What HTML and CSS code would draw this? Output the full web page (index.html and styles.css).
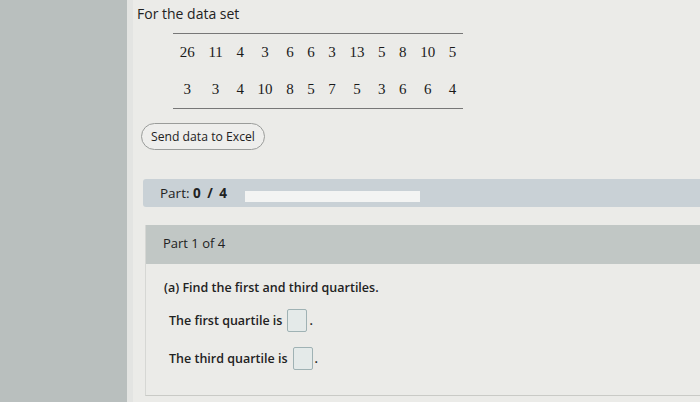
FILE: index.html
```html
<!DOCTYPE html>
<html lang="en">
<head>
    <meta charset="UTF-8" />
    <title>Quartiles – Part 1 of 4</title>
    <link rel="stylesheet" href="styles.css">
</head>
<body>
  <div class="sidebar"></div>

  <div class="main">
    <p class="intro">For the data set</p>

    <table class="data-set">
      <tr>
        <td>26</td><td>11</td><td>4</td><td>3</td><td>6</td><td>6</td>
        <td>3</td><td>13</td><td>5</td><td>8</td><td>10</td><td>5</td>
      </tr>
      <tr>
        <td>3</td><td>3</td><td>4</td><td>10</td><td>8</td><td>5</td>
        <td>7</td><td>5</td><td>3</td><td>6</td><td>6</td><td>4</td>
      </tr>
    </table>

    <button class="excel-btn">Send data to Excel</button>

    <!-- progress -->
    <div class="part-bar">
      <span>Part: <b>0 / 4</b></span>
      <div class="progress"></div>
    </div>

    <div class="part-card">
      <div class="part-title">Part 1 of 4</div>
      <div class="part-body">
        <p class="question">(a) Find the first and third quartiles.</p>
        <div class="answer-row">
          The first quartile is <span class="answer-box"></span><span class="dot">.</span>
        </div>
        <div class="answer-row">
          The third quartile is <span class="answer-box"></span><span class="dot">.</span>
        </div>
      </div>
    </div>
  </div>
</body>
</html>
```

FILE: styles.css
```css
body {
    margin: 0;
    height: 402px;
    display: flex;
    background: #ebebe8;
    font-family: "Open Sans", "DejaVu Sans", sans-serif;
    color: #222;
    overflow: hidden;
}

.sidebar {
    width: 127px;
    background: #b9bfbe;
    flex-shrink: 0;
}

.main {
    flex: 1;
    padding-left: 10px;
    border-left: 6px solid #e3e4e2;
}

.intro {
    font-size: 14px;
    margin: 4px 0 0 -6px;
    height: 21px;
}

.data-set {
    margin: 8px 0 0 30px;
    border-collapse: collapse;
    border-top: 1px solid #777;
    border-bottom: 1px solid #777;
    font-family: "Liberation Serif", "Times New Roman", serif;
    font-size: 15px;
    color: #1a1a1a;
}

    .data-set td {
        height: 37px;
        padding: 0 6.8px;
        text-align: center;
        vertical-align: middle;
    }

.excel-btn {
    display: block;
    margin: 14px 0 0 -2px;
    height: 27px;
    padding: 0 9px;
    border: 1px solid #9a9c9a;
    border-radius: 14px;
    background: #eeeeec;
    font-family: inherit;
    font-size: 12.2px;
    color: #222;
}

.part-bar {
    margin: 29px 0 0 0;
    height: 28px;
    display: flex;
    align-items: center;
    gap: 18px;
    padding-left: 17px;
    background: #c9d1d6;
    border-radius: 3px 0 0 3px;
    font-size: 13.5px;
}

    .part-bar b {
        font-weight: 700;
        word-spacing: 3px;
    }

.progress {
    width: 175px;
    height: 11px;
    background: #f3f4f3;
    margin-top: 6px;
}

.part-card {
    margin: 18px 0 0 2px;
    border-left: 1px solid #d6d7d4;
    border-bottom: 1px solid #c9cac6;
}

.part-title {
    height: 39px;
    line-height: 36px;
    padding-left: 17px;
    background: #c1c7c5;
    font-size: 13px;
}

.part-body {
    height: 131px;
    padding: 15px 0 0 18px;
    box-sizing: border-box;
}

.question {
    margin: 0;
    font-size: 12.5px;
    font-weight: 600;
}

.answer-row {
    display: flex;
    align-items: center;
    gap: 5px;
    margin: 12px 0 0 5px;
    font-size: 12.5px;
    font-weight: 600;
    height: 25px;
}

.answer-row + .answer-row {
    margin-top: 13px;
}

.answer-box {
    width: 18px;
    height: 21px;
    border: 1px solid #9fb2b4;
    border-radius: 2px;
    background: #e4eae9;
}

.dot {
    margin-left: -3px;
}
```
